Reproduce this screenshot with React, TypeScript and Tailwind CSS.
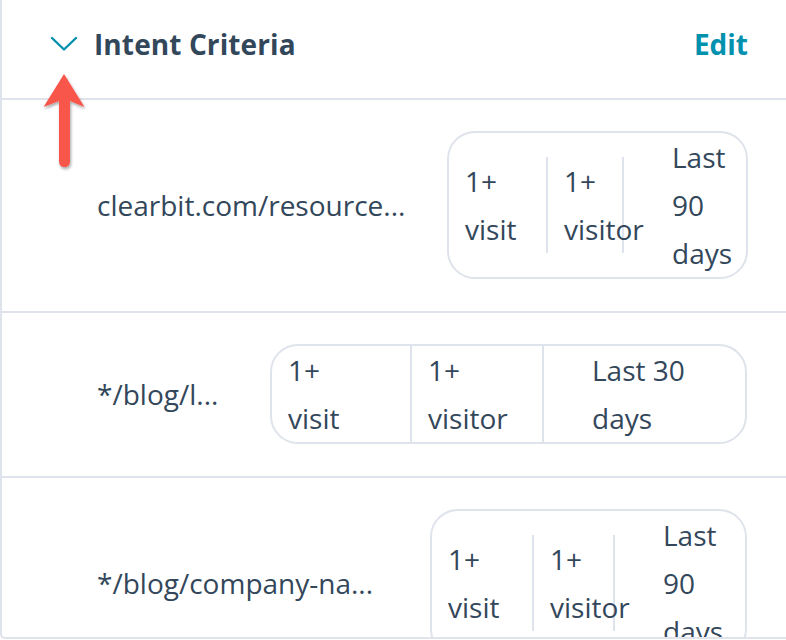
const font = { fontFamily: '"Open Sans", "Noto Sans", sans-serif' };

function Row({
  url,
  last,
  pillW,
  mr,
  c1,
  c2,
  border = true,
}: {
  url: string;
  last: string;
  pillW: string;
  mr: string;
  c1: string;
  c2: string;
  border?: boolean;
}) {
  return (
    <div className={`flex items-center pt-[31px] pb-8 ${border ? "border-b-2 border-[#dfe3eb]" : ""}`}>
      <div className="flex-1 min-w-0 pl-[95px] pr-4 whitespace-nowrap">{url}</div>
      <div
        className={`flex items-center rounded-[28px] border-2 border-[#dfe3eb] shrink-0 ${pillW} ${mr}`}
      >
        <div className={`${c1} shrink-0 border-r-2 border-[#dfe3eb] pl-4 whitespace-nowrap`}>
          <div>1+</div>
          <div>visit</div>
        </div>
        <div className={`${c2} shrink-0 border-r-2 border-[#dfe3eb] pl-4 whitespace-nowrap`}>
          <div>1+</div>
          <div>visitor</div>
        </div>
        <div className="flex-1 min-w-0 pl-12 pr-1">{last}</div>
      </div>
    </div>
  );
}

function Arrow() {
  return (
    <svg
      className="absolute left-0 top-0 pointer-events-none"
      width="120"
      height="190"
      viewBox="0 0 120 190"
    >
      <defs>
        <filter id="sh" x="-50%" y="-50%" width="200%" height="200%">
          <feDropShadow dx="1" dy="2" stdDeviation="1.6" floodColor="#000" floodOpacity="0.35" />
        </filter>
      </defs>
      <path
        d="M62 74 L82.5 107 L68 101 L68 161 Q68 167 62.5 167 Q57 167 57 161 L57 101 L41.5 107 Z"
        fill="#f9564c"
        filter="url(#sh)"
      />
    </svg>
  );
}

export default function App() {
  return (
    <div className="w-[786px] h-[640px] bg-white overflow-hidden text-[#33475b]" style={font}>
      <div className="relative h-[639px] overflow-hidden border-l-2 border-b-2 border-[#dfe3eb] rounded-bl-[5px]">
        <div className="flex items-center h-[100px] border-b-2 border-[#dfe3eb] pl-[48px] pr-[38px] pb-[10px]">
          <svg width="28" height="16" viewBox="0 0 28 16" className="shrink-0">
            <polyline
              points="2,2 14,13.5 26,2"
              fill="none"
              stroke="#0091ae"
              strokeWidth="2.4"
              strokeLinecap="round"
              strokeLinejoin="round"
            />
          </svg>
          <div className="ml-[16px] text-[28px] font-bold leading-none tracking-[0.1px]">Intent Criteria</div>
          <div className="ml-auto text-[28px] font-bold text-[#0091ae] leading-none">Edit</div>
        </div>
        <div className="text-[28px] leading-[48px]">
          <Row
            url="clearbit.com/resource..."
            last="Last 90 days"
            pillW="w-[301px]"
            mr="mr-[38px]"
            c1="w-[99px]"
            c2="w-[76px]"
          />
          <Row
            url="*/blog/l..."
            last="Last 30 days"
            pillW="w-[477px]"
            mr="mr-[39px]"
            c1="w-[140px]"
            c2="w-[132px]"
          />
          <Row
            url="*/blog/company-na..."
            last="Last 90 days"
            pillW="w-[317px]"
            mr="mr-[39px]"
            c1="w-[102px]"
            c2="w-[81px]"
            border={false}
          />
        </div>
        <Arrow />
      </div>
    </div>
  );
}
